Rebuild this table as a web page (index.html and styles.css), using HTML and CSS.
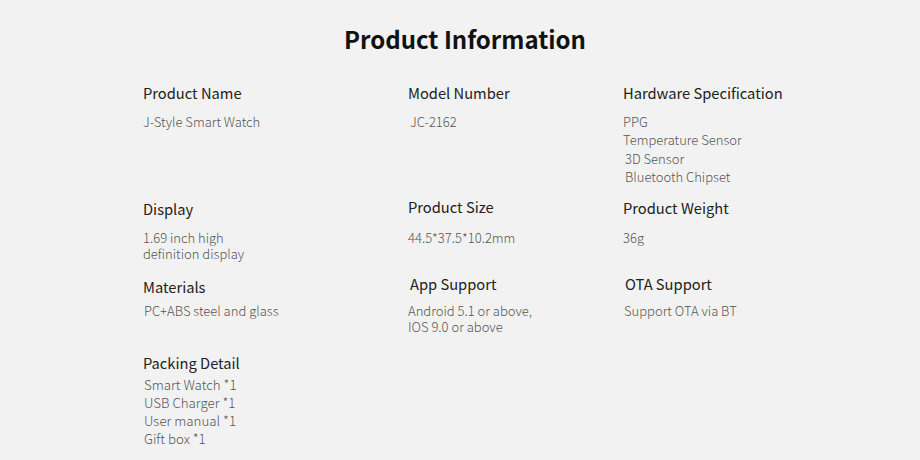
FILE: index.html
```html
<!DOCTYPE html>
<html lang="en">
<head>
<meta charset="utf-8">
<title>Product Information</title>
<link rel="stylesheet" href="styles.css">
</head>
<body>
<main class="page">
  <h1 class="title">Product Information</h1>
  <div class="grid">
    <div class="cell r1">
      <h2 class="label">Product Name</h2>
      <p class="value">J-Style Smart Watch</p>
    </div>
    <div class="cell r1">
      <h2 class="label">Model Number</h2>
      <p class="value indent">JC-2162</p>
    </div>
    <div class="cell r1">
      <h2 class="label">Hardware Specification</h2>
      <p class="value list">PPG</p>
      <p class="value list">Temperature Sensor</p>
      <p class="value list indent">3D Sensor</p>
      <p class="value list indent">Bluetooth Chipset</p>
    </div>

    <div class="cell r2">
      <h2 class="label">Display</h2>
      <p class="value wrap">1.69 inch high<br>definition display</p>
    </div>
    <div class="cell r2">
      <h2 class="label up2">Product Size</h2>
      <p class="value">44.5*37.5*10.2mm</p>
    </div>
    <div class="cell r2">
      <h2 class="label up1">Product Weight</h2>
      <p class="value">36g</p>
    </div>

    <div class="cell r3">
      <h2 class="label">Materials</h2>
      <p class="value nudge">PC+ABS steel and glass</p>
    </div>
    <div class="cell r3">
      <h2 class="label up3 indent">App Support</h2>
      <p class="value wrap">Android 5.1 or above,<br>IOS 9.0 or above</p>
    </div>
    <div class="cell r3">
      <h2 class="label up3 indent">OTA Support</h2>
      <p class="value nudge">Support OTA via BT</p>
    </div>

    <div class="cell r4">
      <h2 class="label">Packing Detail</h2>
      <p class="value list">Smart Watch *1</p>
      <p class="value list">USB Charger *1</p>
      <p class="value list">User manual *1</p>
      <p class="value list">Gift box *1</p>
    </div>
  </div>
</main>
</body>
</html>
```
FILE: styles.css
```css
* { box-sizing: border-box; }
html, body {
  margin: 0;
  padding: 0;
  background: #f2f2f2;
}
body {
  font-family: "Noto Sans CJK SC", "Noto Sans", sans-serif;
  color: #333;
  width: 920px;
  height: 460px;
  overflow: hidden;
}
.page {
  padding-top: 22px;
}
.title {
  margin: 0;
  text-align: center;
  font-size: 24px;
  line-height: 34px;
  font-weight: 700;
  color: #111;
  padding-left: 10px;
}
.grid {
  margin-top: 26px;
  padding-left: 143px;
  display: grid;
  grid-template-columns: 265px 215px 1fr;
  grid-template-rows: 116px 78px 76px auto;
}
.cell {
  display: flex;
  flex-direction: column;
}
.label {
  margin: 0;
  font-size: 14.7px;
  line-height: 22px;
  font-weight: 400;
  color: #222;
}
.value {
  margin: 0;
  font-size: 13px;
  line-height: 16px;
  font-weight: 300;
  color: #555;
}
.list { line-height: 18.3px; }
.r1 .label { margin-bottom: 10px; }
.r1 .list:first-of-type { margin-top: -1px; }
.r2 .label { margin-bottom: 10px; }
.r2 .label.up2 { margin-top: -2px; margin-bottom: 12px; }
.r2 .label.up1 { margin-top: -1px; margin-bottom: 11px; }
.r3 .label { margin-bottom: 5px; }
.r3 .label.up3 { margin-top: -3px; margin-bottom: 8px; }
.r4 .label { margin-bottom: 2px; }
.r4 .value { line-height: 18px; padding-left: 1px; font-size: 13.3px; }
.indent { padding-left: 2px; }
.nudge { padding-left: 1px; }
```
